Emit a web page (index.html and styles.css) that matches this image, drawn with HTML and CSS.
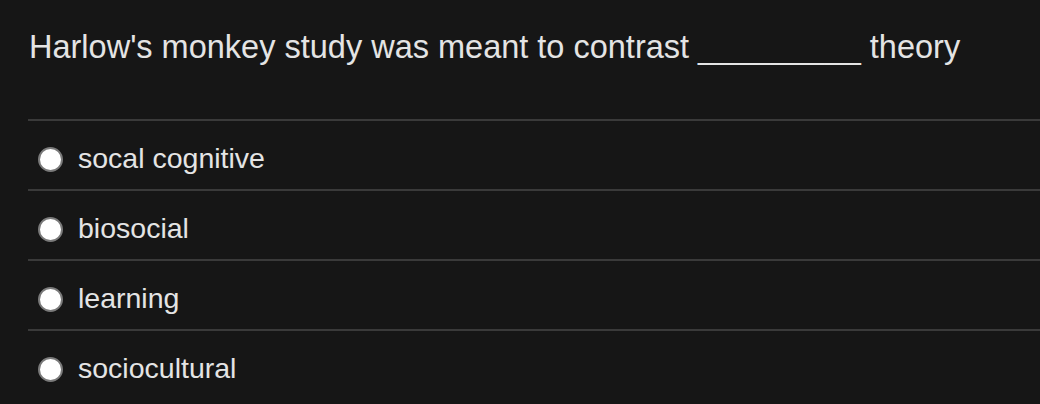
FILE: index.html
```html
<!DOCTYPE html>
<html>
<head>
<meta charset="utf-8">
<link rel="stylesheet" href="styles.css">
</head>
<body>
<div class="question">Harlow's monkey study was meant to contrast <span class="blank">_________</span> theory</div>
<ul class="options">
  <li class="option"><span class="radio"></span><span class="label">socal cognitive</span></li>
  <li class="option"><span class="radio"></span><span class="label">biosocial</span></li>
  <li class="option"><span class="radio"></span><span class="label">learning</span></li>
  <li class="option"><span class="radio"></span><span class="label">sociocultural</span></li>
</ul>
</body>
</html>
```
FILE: styles.css
```css
html, body {
  margin: 0;
  padding: 0;
  background: #161616;
  color: #e4e4e4;
  font-family: "Liberation Sans", Arial, sans-serif;
}
.question {
  font-size: 32.5px;
  line-height: 36px;
  padding: 29px 0 0 29px;
  height: 119px;
  box-sizing: border-box;
  white-space: nowrap;
}
.blank {
  color: #e4e4e4;
}
.options {
  list-style: none;
  margin: 0 0 0 28px;
  padding: 0;
}
.option {
  display: flex;
  align-items: center;
  height: 70px;
  box-sizing: border-box;
  border-top: 2px solid #3a3a3a;
  padding: 8px 0 0 10px;
}
.radio {
  width: 25px;
  height: 25px;
  box-sizing: border-box;
  border-radius: 50%;
  background: #ffffff;
  border: 2px solid #7a7a7a;
  flex: none;
  margin-right: 15px;
}
.label {
  font-size: 28.5px;
  line-height: 34px;
  margin-bottom: 3px;
}
```
